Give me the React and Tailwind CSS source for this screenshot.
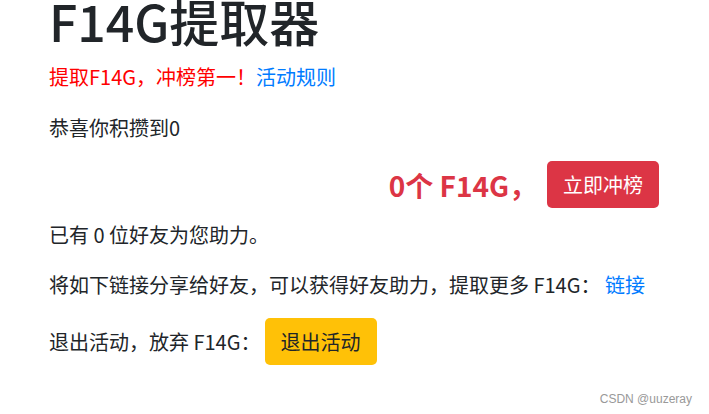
export default function App() {
  return (
    <div
      className="relative w-[709px] h-[414px] bg-white text-[#212529] overflow-hidden"
      style={{ fontFamily: '"Noto Sans CJK SC", "Noto Sans", sans-serif' }}
    >
      <div className="px-[49px] pr-[50px] flex flex-col">
        <h1 className="text-[50px] leading-[40px] h-[40px] font-medium">F14G提取器</h1>
        <p className="mt-[22px] text-[20px] leading-[30px]">
          <span className="text-[#ff0000]">提取F14G，冲榜第一！</span>
          <a className="text-[#007bff]" href="#">活动规则</a>
        </p>
        <p className="mt-[21px] text-[20px] leading-[30px]">恭喜你积攒到0</p>
        <div className="mt-[18px] flex justify-end items-center">
          <span className="text-[28px] font-semibold text-[#dc3545] leading-[40px]">0个 F14G，</span>
          <button className="ml-[10px] h-[47px] w-[112px] rounded-[5px] bg-[#dc3545] text-white text-[20px] leading-[30px]">
            立即冲榜
          </button>
        </div>
        <p className="mt-[12px] text-[20px] leading-[30px]">已有 0 位好友为您助力。</p>
        <p className="mt-[20px] text-[20px] leading-[30px]">
          将如下链接分享给好友，可以获得好友助力，提取更多 F14G： <a className="text-[#007bff]" href="#">链接</a>
        </p>
        <div className="mt-[18px] flex items-center text-[20px] leading-[30px]">
          <span>退出活动，放弃 F14G：</span>
          <button className="ml-[4px] h-[47px] w-[112px] rounded-[5px] bg-[#ffc107] text-[#212529] text-[20px] leading-[30px]">
            退出活动
          </button>
        </div>
      </div>
      <div className="absolute right-[17px] bottom-[8px] text-[12px] leading-[14px] text-[#999999]" style={{ fontFamily: '"Liberation Sans", sans-serif' }}>
        CSDN @uuzeray
      </div>
    </div>
  );
}
